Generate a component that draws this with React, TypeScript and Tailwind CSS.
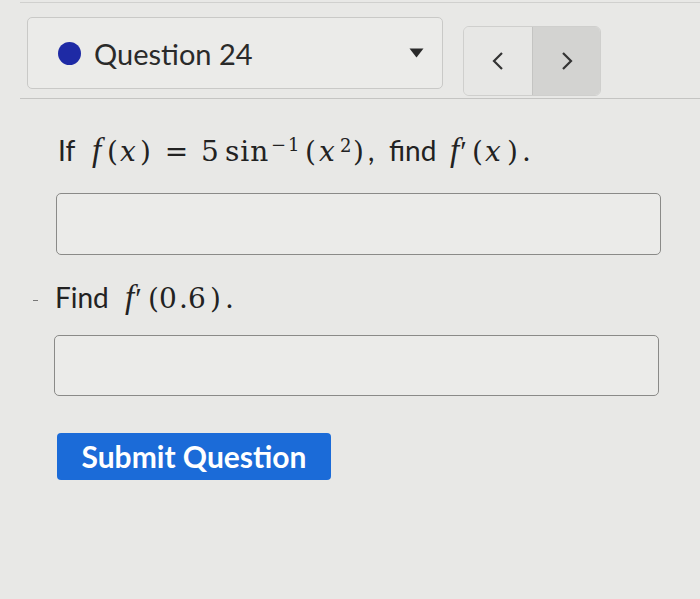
import React from "react";

const serif = { fontFamily: '"DejaVu Serif", "Liberation Serif", serif' };
const lib = { fontFamily: '"Liberation Serif", "DejaVu Serif", serif' };

type GProps = {
  w: string;
  cls?: string;
  serifFont?: boolean;
  children: React.ReactNode;
};

function G({ w, cls = "", serifFont = true, children }: GProps) {
  return (
    <span className={`inline-block ${w} ${cls}`} style={serifFont ? serif : undefined}>
      {children}
    </span>
  );
}

function F({ prime = false }: { prime?: boolean }) {
  return (
    <>
      <span style={lib} className="italic text-[33px] leading-[20px]">f</span>
      {prime && (
        <span style={lib} className="text-[30px] leading-[20px] ml-[1px]">′</span>
      )}
    </>
  );
}

export default function App() {
  return (
    <div
      className="w-[700px] h-[599px] bg-[#e8e8e6] overflow-hidden flex flex-col text-[#222]"
      style={{ fontFamily: 'Lato, "Open Sans", sans-serif' }}
    >
      <div className="h-[3px] border-b border-[#d0d0ce] ml-[20px]" />
      <div className="flex items-start pl-[27px] mt-[14px]">
        <div className="w-[416px] h-[72px] border border-[#c9c9c7] rounded-[5px] bg-[#ebebe9] flex items-center pl-[30px] pr-[18px]">
          <span className="w-[23px] h-[23px] rounded-full bg-[#1e2aa5] shrink-0" />
          <span className="ml-[13px] text-[29px] leading-none text-[#2a2a2a]">Question 24</span>
          <svg className="ml-auto" width="15" height="10" viewBox="0 0 15 10">
            <path d="M0.5 0.5 L14.5 0.5 L7.5 9.5 Z" fill="#2a2a2a" />
          </svg>
        </div>
        <div className="ml-[20px] mt-[9px] w-[138px] h-[70px] flex rounded-[6px] border border-[#cfcfcd] overflow-hidden">
          <div className="w-[69px] bg-[#e7e7e5] flex items-center justify-center border-r border-[#c4c4c2]">
            <svg width="12" height="20" viewBox="0 0 12 20">
              <path d="M10 2 L2 10 L10 18" fill="none" stroke="#333" strokeWidth="2.2" />
            </svg>
          </div>
          <div className="flex-1 bg-[#d3d3d1] flex items-center justify-center">
            <svg width="12" height="20" viewBox="0 0 12 20">
              <path d="M2 2 L10 10 L2 18" fill="none" stroke="#333" strokeWidth="2.2" />
            </svg>
          </div>
        </div>
      </div>
      <div className="mt-[2px] ml-[20px] border-t border-[#c4c4c2]" />

      <div className="mt-[31px] pl-[58px] text-[28px] leading-[40px] h-[40px] whitespace-nowrap">
        <G w="w-[31px]" serifFont={false}>If</G>
        <G w="w-[17px]" cls="pl-[3px]"><F /></G>
        <G w="w-[13px]" cls="pl-[1px] text-[28px]">(</G>
        <G w="w-[20px]" cls="pl-[1px] italic text-[28px]">x</G>
        <G w="w-[14px]" cls="pl-[1px] text-[28px]">)</G>
        <G w="w-[47px]" cls="text-center text-[28px]">=</G>
        <G w="w-[19px]" cls="pl-[1px] text-[28px]">5</G>
        <G w="w-[51px]" cls="pl-[6px] tracking-[1px] text-[28px]">sin</G>
        <G w="w-[34px]" cls="pl-[1px] tracking-[2px] text-[18px] relative -top-[10px]">−1</G>
        <G w="w-[15px]" cls="pl-[1px] text-[28px]">(</G>
        <G w="w-[20px]" cls="italic text-[28px]">x</G>
        <G w="w-[14px]" cls="pl-[1px] text-[18px] relative -top-[9px]">2</G>
        <G w="w-[13px]" cls="text-[28px]">)</G>
        <G w="w-[12px]" cls="pl-[2px]" serifFont={false}>,</G>
        <G w="w-[67px]" cls="pl-[11px]" serifFont={false}>find</G>
        <G w="w-[25px]" cls="pl-[5px]"><F prime /></G>
        <G w="w-[14px]" cls="pl-[2px] text-[28px]">(</G>
        <G w="w-[23px]" cls="pl-[1px] italic text-[28px]">x</G>
        <G w="w-[13px]" cls="text-[28px]">)</G>
        <G w="w-[10px]" cls="pl-[2px] text-[28px]">.</G>
      </div>

      <div className="mt-[23px] ml-[56px] w-[605px] h-[62px] border border-[#8a8a88] rounded-[5px] bg-[#ebebe9]" />

      <div className="mt-[22px] pl-[33px] text-[28px] leading-[40px] h-[40px] whitespace-nowrap">
        <span className="inline-block w-[5px] h-[1px] bg-[#777] align-middle" />
        <G w="w-[68px]" cls="ml-[17px]" serifFont={false}>Find</G>
        <G w="w-[23px]" cls="pl-[2px]"><F prime /></G>
        <G w="w-[13px]" cls="pl-[2px] text-[28px]">(</G>
        <G w="w-[18px]" cls="text-[28px]">0</G>
        <G w="w-[11px]" cls="pl-[2px] text-[28px]">.</G>
        <G w="w-[19px]" cls="text-[28px]">6</G>
        <G w="w-[18px]" cls="pl-[3px] text-[28px]">)</G>
        <G w="w-[10px]" cls="text-[28px]">.</G>
      </div>

      <div className="mt-[18px] ml-[54px] w-[605px] h-[61px] border border-[#8a8a88] rounded-[5px] bg-[#ebebe9]" />
      <button className="mt-[37px] ml-[57px] w-[274px] h-[47px] rounded-[4px] bg-[#1b6bd8] text-white text-[30px] font-bold flex items-center justify-center">
        Submit Question
      </button>
    </div>
  );
}
